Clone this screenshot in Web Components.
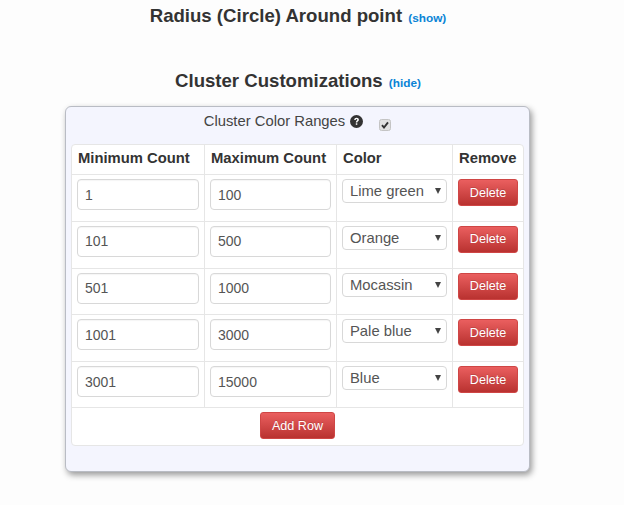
<!DOCTYPE html>
<html>
<head>
<meta charset="utf-8">
<style>
html, body { margin: 0; padding: 0; background: #fdfdfd; }
body { font-family: "Liberation Sans", Arial, sans-serif; color: #333; width: 624px; height: 505px; overflow: hidden; }
</style>
</head>
<body>
<section-title link="show" style="--title-pad: 6px 0 0 0">Radius (Circle) Around point</section-title>
<section-title link="hide" style="--title-pad: 43px 0 0 0">Cluster Customizations</section-title>
<cluster-panel></cluster-panel>

<script>
class SectionTitle extends HTMLElement {
    constructor() {
        super();
        this.shadow = this.attachShadow({mode: 'open'});
        this.render();
    }
    render() {
        this.shadow.innerHTML = `
        <style>
        :host { display: block; width: 596px; padding: var(--title-pad, 0); }
        h3 { margin: 0; font-size: 18.6px; line-height: 20px; font-weight: bold; color: #333; text-align: center; }
        a { font-size: 11.8px; color: #0a84d6; text-decoration: none; margin-left: 1px; }
        </style>
        <h3><slot></slot> <a href="#">(${this.getAttribute('link')})</a></h3>
        `;
    }
}

class RangeButton extends HTMLElement {
    constructor() {
        super();
        this.shadow = this.attachShadow({mode: 'open'});
        this.shadow.innerHTML = `
        <style>
        :host { display: inline-block; }
        button {
            display: block; width: var(--btn-width, 60px); height: 27px; padding: 0;
            font: 12.6px "Liberation Sans", Arial, sans-serif; color: #fff;
            border: 1px solid #cf4645; border-radius: 3px;
            background: linear-gradient(to bottom, #ea5f5f 0%, #b93230 100%);
            text-shadow: 0 -1px 0 rgba(0,0,0,.15);
        }
        </style>
        <button type="button"><slot></slot></button>
        `;
    }
}

class RangeRow extends HTMLElement {
    constructor() {
        super();
        this.shadow = this.attachShadow({mode: 'open'});
        this.render();
    }
    render() {
        const min = this.getAttribute('min');
        const max = this.getAttribute('max');
        const color = this.getAttribute('color');
        this.shadow.innerHTML = `
        <style>
        :host { display: grid; grid-template-columns: 132px 132px 116px 71px; height: 45.75px; border-top: 1px solid #e6e6e6; }
        .cell { padding: 4px 5px 0 5px; border-left: 1px solid #e6e6e6; box-sizing: border-box; }
        .cell:first-of-type { border-left: none; }
        input {
            display: block; width: 122px; height: 31px; box-sizing: border-box; padding: 0 7px;
            font: 14px "Liberation Sans", Arial, sans-serif; color: #555; background: #fff;
            border: 1px solid #d8d8d8; border-radius: 4px; box-shadow: inset 0 1px 1px rgba(0,0,0,.04);
        }
        .max input { width: 121px; }
        .sel {
            width: 105px; height: 24px; box-sizing: border-box; padding: 0 7px;
            display: flex; align-items: center; justify-content: space-between;
            font-size: 14.8px; color: #555; background: #fff;
            border: 1px solid #d8d8d8; border-radius: 4px;
        }
        .sel i { width: 0; height: 0; border: 3.5px solid transparent; border-top: 6px solid #444; border-bottom: 0; margin-right: -2px; }
        </style>
        <div class="cell"><input value="${min}"></div>
        <div class="cell max"><input value="${max}"></div>
        <div class="cell"><div class="sel"><span>${color}</span><i></i></div></div>
        <div class="cell"><range-button>Delete</range-button></div>
        `;
    }
}

class ClusterPanel extends HTMLElement {
    constructor() {
        super();
        this.shadow = this.attachShadow({mode: 'open'});
        this.render();
    }
    render() {
        const rows = [
            ['1', '100', 'Lime green'],
            ['101', '500', 'Orange'],
            ['501', '1000', 'Mocassin'],
            ['1001', '3000', 'Pale blue'],
            ['3001', '15000', 'Blue']
        ];
        this.shadow.innerHTML = `
        <style>
        :host {
            display: block; width: 465px; height: 366px; box-sizing: border-box; margin: 13px 0 0 65px;
            padding: 0 5px; background: #f4f5fe;
            border: 1px solid #b9bcc4; border-radius: 6px;
            box-shadow: 2px 3px 6px rgba(0,0,0,.4);
        }
        .head {
            height: 37px; box-sizing: border-box; padding-top: 5px; display: flex; justify-content: center; align-items: flex-start;
            font-size: 14.8px; line-height: 18px; color: #444;
        }
        .help { width: 13px; height: 13px; margin: 3px 0 0 5px; }
        .check { width: 12px; height: 12px; margin: 7px 0 0 16px; }
        .table { background: #fff; border: 1px solid #e6e6e6; border-radius: 4px; width: 453px; box-sizing: border-box; height: 302px; }
        .th { display: grid; grid-template-columns: 132px 132px 116px 71px; height: 29px; }
        .th div { padding: 5px 0 0 6px; font-size: 14.8px; line-height: 17px; font-weight: bold; color: #333; border-left: 1px solid #e6e6e6; }
        .th div:first-child { border-left: none; }
        range-row:last-of-type { height: 45px; }
        .foot { border-top: 1px solid #e6e6e6; display: flex; justify-content: center; padding: 4px 0 0 0; }
        .foot range-button { --btn-width: 75px; }
        </style>
        <div class="head">
            <span>Cluster Color Ranges</span>
            <svg class="help" viewBox="0 0 13 13"><circle cx="6.5" cy="6.5" r="6.5" fill="#333"/><path d="M4.2 5C4.3 3.6 5.3 2.8 6.6 2.8c1.3 0 2.3.8 2.3 1.9 0 1.6-1.6 1.6-1.6 2.8H5.8c0-1.8 1.5-1.9 1.5-2.8 0-.4-.3-.7-.8-.7-.5 0-.8.3-.9 1z" fill="#fff"/><rect x="5.8" y="8.3" width="1.5" height="1.5" fill="#fff"/></svg>
            <svg class="check" viewBox="0 0 12 12" role="checkbox" aria-checked="true"><rect x=".5" y=".5" width="11" height="11" rx="2" fill="#e2e2e2" stroke="#c4c4c4"/><path d="M3 6.2 5 8.6 9 3.4" fill="none" stroke="#333" stroke-width="1.9"/></svg>
        </div>
        <div class="table">
            <div class="th"><div>Minimum Count</div><div>Maximum Count</div><div>Color</div><div>Remove</div></div>
            ${rows.map(r => `<range-row min="${r[0]}" max="${r[1]}" color="${r[2]}"></range-row>`).join('')}
            <div class="foot"><range-button>Add Row</range-button></div>
        </div>
        `;
    }
}

customElements.define('section-title', SectionTitle);
customElements.define('range-button', RangeButton);
customElements.define('range-row', RangeRow);
customElements.define('cluster-panel', ClusterPanel);
</script>
</body>
</html>
